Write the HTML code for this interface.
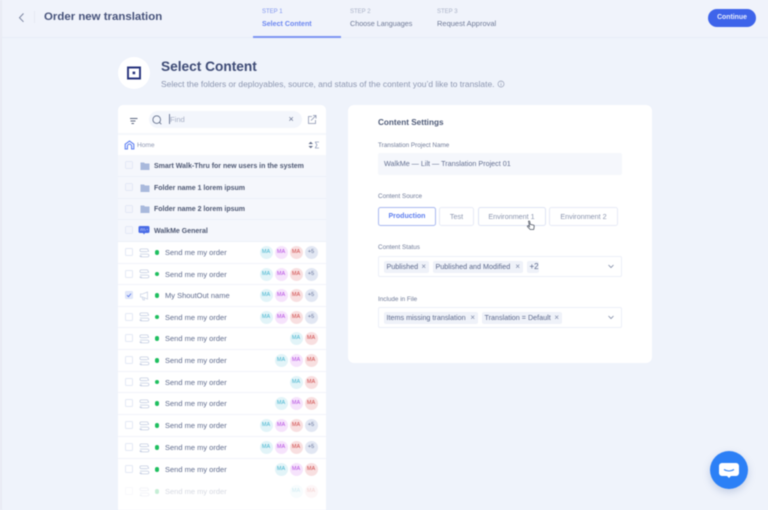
<!DOCTYPE html>
<html><head><meta charset="utf-8">
<style>
*{box-sizing:border-box}
html,body{margin:0;padding:0}
body{width:768px;height:510px;overflow:hidden;background:#eff3fb;font-family:"Liberation Sans",sans-serif;position:relative;color:#4e5a7d}
#w{position:absolute;left:0;top:0;width:768px;height:510px;filter:blur(.5px)}
.a{position:absolute;white-space:nowrap}
.row{position:absolute;left:118px;width:208px;height:21px;background:#fff}
.row.f{background:#f5f7fc}
.row .c{position:absolute;left:7px;top:6px;width:8px;height:8px;border:1px solid #e4e9f5;border-radius:1.5px;background:#fff}
.row.f .c{background:#f3f5fb}
.row .t{position:absolute;left:47px;top:4px;font-size:7.5px;line-height:13px;color:#5f6b8d;white-space:nowrap}
.row.f .t{left:36px;top:4.5px;font-weight:bold;color:#4e5873;font-size:7px}
.row .d{position:absolute;left:36.5px;top:8px;width:4.6px;height:4.6px;border-radius:50%;background:#1fbf5f}
.row svg{position:absolute;left:21px;top:5.5px}
.av{position:absolute;top:4px;width:13px;height:13px;border-radius:50%;font-size:5.5px;line-height:13px;text-align:center}
.m1{background:#e2f4f8;color:#45b4cf}.m2{background:#f6e3fc;color:#b44ee0}.m3{background:#f8dfe0;color:#cf4b4b}.m4{background:#e2e7f3;color:#66749a}
.chip{position:absolute;height:11.5px;background:#eff2f9;border-radius:2px;font-size:7.2px;line-height:11.5px;color:#5a668a;padding-left:2.5px;white-space:nowrap}
.chip i{position:absolute;right:3px;top:0;font-style:normal;font-size:8px;color:#7d88a6}
.btn{position:absolute;top:207px;height:19px;background:#fff;border:1px solid #e7ebf6;border-radius:2.5px;font-size:7.2px;line-height:17px;text-align:center;color:#8a94ae}
.lab{position:absolute;font-size:6.35px;color:#6f7a98;white-space:nowrap;line-height:9px}
.sel{position:absolute;left:378px;width:244px;height:21px;background:#fff;border:1px solid #edf0f8;border-radius:2px}
.sep{position:absolute;left:118px;width:208px;height:1px;background:#f1f3fa}
.sep.s{background:#edf0f8}
</style></head>
<body>
<svg width="0" height="0" style="position:absolute"><defs>
<symbol id="ic" viewBox="0 0 11 10"><path d="M8.300 3.700H2.300a1.400 1.400 0 0 1 0-2.800h5.500a1.400 1.400 0 0 1 1.400 1.400M1 6.100h7.500a1.400 1.400 0 0 1 0 2.800H2.300A1.400 1.400 0 0 1 .9 7.500" fill="none" stroke="#c6cfe3" stroke-width=".8"/><circle cx="9.300" cy="3" r=".8" fill="#c6cfe3"/><circle cx="2" cy="8" r=".8" fill="#c6cfe3"/></symbol>
<symbol id="fo" viewBox="0 0 10 10"><path d="M.5 1.500h3.500l1 1h4.500v6.500H.5z" fill="#a9b9dc"/></symbol>
</defs></svg>
<div id="w">
<!-- top bar -->
<div class="a" style="left:0;top:0;width:768px;height:38px;background:#f0f3fb;border-bottom:1px solid #e7ecf7"></div>
<div class="a" style="left:0;top:0;width:1.5px;height:510px;background:#e8ebf3"></div>
<svg class="a" style="left:17px;top:10.500px" width="9" height="13" viewBox="0 0 9 13"><path d="M6.500 2.500 2.500 6.700l4 4.100" fill="none" stroke="#7a84a0" stroke-width="1"/></svg>
<div class="a" style="left:34px;top:11px;width:1px;height:12px;background:#e6e9f2"></div>
<div class="a" style="left:44px;top:10px;font-size:11.450px;line-height:15px;font-weight:bold;color:#46527a">Order new translation</div>
<div class="a" style="left:262px;top:7.500px;font-size:6px;line-height:8px;color:#7f95ee">STEP 1</div>
<div class="a" style="left:262px;top:18.500px;font-size:7.100px;line-height:10px;font-weight:bold;color:#6c87f0">Select Content</div>
<div class="a" style="left:253px;top:36px;width:88px;height:1.600px;background:#7d95f2"></div>
<div class="a" style="left:350px;top:7.500px;font-size:6px;line-height:8px;color:#a9b1c6">STEP 2</div>
<div class="a" style="left:350px;top:18.500px;font-size:7.200px;line-height:10px;color:#6f7a97">Choose Languages</div>
<div class="a" style="left:437px;top:7.500px;font-size:6px;line-height:8px;color:#a9b1c6">STEP 3</div>
<div class="a" style="left:437px;top:18.500px;font-size:7.500px;line-height:10px;color:#6f7a97">Request Approval</div>
<div class="a" style="left:708px;top:9px;width:48px;height:18px;border-radius:9px;background:#3e64ea;color:#e8edfd;font-size:6.900px;line-height:18.500px;text-align:center;font-weight:bold">Continue</div>

<!-- heading -->
<div class="a" style="left:118px;top:57px;width:32px;height:32px;border-radius:50%;background:#fff"></div>
<svg class="a" style="left:127px;top:66px" width="14" height="14" viewBox="0 0 14 14"><path d="M1 1.500h12v11H1z" fill="none" stroke="#27337c" stroke-width="1.900"/><rect x="5.600" y="5.600" width="2.600" height="2.600" fill="#27337c"/></svg>
<div class="a" style="left:161px;top:57.500px;font-size:13.700px;line-height:18px;font-weight:bold;color:#3d4a75">Select Content</div>
<div class="a" style="left:161px;top:78px;font-size:8.450px;line-height:12px;color:#8c96b0">Select the folders or deployables, source, and status of the content you’d like to translate.</div>
<svg class="a" style="left:497px;top:80px" width="8" height="8" viewBox="0 0 8 8"><circle cx="4" cy="4" r="3" fill="none" stroke="#98a1b8" stroke-width=".7"/><path d="M4 3.500v2.200M4 2.200v.7" stroke="#98a1b8" stroke-width=".7"/></svg>

<!-- left panel -->
<div class="a" style="left:118px;top:105px;width:208px;height:405px;background:#fff;border-radius:5px 5px 0 0"></div>
<svg class="a" style="left:129px;top:117px" width="10" height="9" viewBox="0 0 10 9"><path d="M1 1.500h7.500M1.500 4h5M2.500 6.500h2.500" stroke="#5b6680" stroke-width="1" fill="none"/></svg>
<div class="a" style="left:149px;top:111px;width:153px;height:17px;border-radius:8.500px;background:#f3f6fc"></div>
<svg class="a" style="left:151px;top:113.500px" width="12" height="12" viewBox="0 0 12 12"><circle cx="5.700" cy="5.600" r="3.800" fill="none" stroke="#64708c" stroke-width=".9"/><path d="M8.500 8.400 10.300 10.200" stroke="#64708c" stroke-width=".9"/></svg>
<div class="a" style="left:169px;top:114px;width:.8px;height:10px;background:#6e7a98"></div>
<div class="a" style="left:170px;top:114px;font-size:7.600px;line-height:11px;color:#a8b0c6">Find</div>
<div class="a" style="left:288.500px;top:114px;font-size:9px;line-height:11px;color:#667190">×</div>
<svg class="a" style="left:307px;top:114px" width="10" height="11" viewBox="0 0 10 11"><path d="M5 2.500H1.500v7h7V6M4 6.500 9 1.500M6 1.500h3v3" fill="none" stroke="#8a94b0" stroke-width=".8"/></svg>
<div class="a" style="left:118px;top:133px;width:208px;height:2px;background:#f5f7fc"></div>
<svg class="a" style="left:124px;top:140px" width="11" height="10" viewBox="0 0 11 10"><path d="M1.200 9V4.200L5.500 1l4.300 3.200V9H7.600V6.200a2 2 0 0 0-4.200 0V9z" fill="none" stroke="#5f80f2" stroke-width="1.100"/></svg>
<div class="a" style="left:137px;top:140.500px;font-size:6.600px;line-height:10px;color:#8d97b1">Home</div>
<svg class="a" style="left:308px;top:140px" width="12" height="10" viewBox="0 0 12 10"><path d="M.5 4 2.700 1.800 5 4zM.5 6l2.200 2.200L5 6z" fill="#5d6886"/><path d="M7 2h4M7 8h4M7.200 2 9 5 7.200 8" fill="none" stroke="#98a3bd" stroke-width=".8"/></svg>

<!-- folder rows -->
<div class="row f" style="top:155px"><div class="c"></div><svg width="10" height="10" style="left:21.500px"><use href="#fo"/></svg><div class="t">Smart Walk-Thru for new users in the system</div></div>
<div class="row f" style="top:177px"><div class="c"></div><svg width="10" height="10" style="left:21.500px"><use href="#fo"/></svg><div class="t">Folder name 1 lorem ipsum</div></div>
<div class="row f" style="top:198.500px"><div class="c"></div><svg width="10" height="10" style="left:21.500px"><use href="#fo"/></svg><div class="t">Folder name 2 lorem ipsum</div></div>
<div class="row f" style="top:220px"><div class="c"></div><svg width="12" height="11" viewBox="0 0 12 11" style="left:20px;top:5px"><path d="M2 1h8a1.500 1.500 0 0 1 1.500 1.500v4A1.500 1.500 0 0 1 10 8H7L6 9.500 5 8H2A1.500 1.500 0 0 1 .5 6.500v-4A1.500 1.500 0 0 1 2 1z" fill="#4a6ce6"/><path d="M3 6V3.500M3 4.500c1-1.500 2-1 2 1.500M5 4.500c1-1.500 2-1 2 1.500M8.500 4.500h1.500" stroke="#dfe6fc" stroke-width=".5" fill="none"/></svg><div class="t">WalkMe General</div></div>

<!-- item rows -->
<div class="row" style="top:242px"><div class="c"></div><svg width="11" height="10"><use href="#ic"/></svg><div class="d"></div><div class="t">Send me my order</div><div class="av m1" style="left:141.500px">MA</div><div class="av m2" style="left:156.500px">MA</div><div class="av m3" style="left:171.500px">MA</div><div class="av m4" style="left:186.500px">+5</div></div>
<div class="row" style="top:263.500px"><div class="c"></div><svg width="11" height="10"><use href="#ic"/></svg><div class="d"></div><div class="t">Send me my order</div><div class="av m1" style="left:141.500px">MA</div><div class="av m2" style="left:156.500px">MA</div><div class="av m3" style="left:171.500px">MA</div><div class="av m4" style="left:186.500px">+5</div></div>
<div class="row" style="top:285px"><div class="c" style="background:#e3e9fa;border-color:#dde4f8"><svg width="8" height="8" viewBox="0 0 8 8" style="left:-1px;top:-1px"><path d="M2 4.200 3.500 5.700 6 2.600" fill="none" stroke="#5f7cea" stroke-width=".9"/></svg></div><svg width="11" height="10" viewBox="0 0 11 10"><path d="M8.500 1 3.500 3H1.500v3h2l5 2zM3 6l1 3h1.500L5 7" fill="none" stroke="#cdd5e7" stroke-width=".8"/></svg><div class="d"></div><div class="t">My ShoutOut name</div><div class="av m1" style="left:141.500px">MA</div><div class="av m2" style="left:156.500px">MA</div><div class="av m3" style="left:171.500px">MA</div><div class="av m4" style="left:186.500px">+5</div></div>
<div class="row" style="top:306.500px"><div class="c"></div><svg width="11" height="10"><use href="#ic"/></svg><div class="d"></div><div class="t">Send me my order</div><div class="av m1" style="left:141.500px">MA</div><div class="av m2" style="left:156.500px">MA</div><div class="av m3" style="left:171.500px">MA</div><div class="av m4" style="left:186.500px">+5</div></div>
<div class="row" style="top:328px"><div class="c"></div><svg width="11" height="10"><use href="#ic"/></svg><div class="d"></div><div class="t">Send me my order</div><div class="av m1" style="left:171.500px">MA</div><div class="av m3" style="left:186.500px">MA</div></div>
<div class="row" style="top:350px"><div class="c"></div><svg width="11" height="10"><use href="#ic"/></svg><div class="d"></div><div class="t">Send me my order</div><div class="av m1" style="left:156.500px">MA</div><div class="av m2" style="left:171.500px">MA</div><div class="av m3" style="left:186.500px">MA</div></div>
<div class="row" style="top:371.500px"><div class="c"></div><svg width="11" height="10"><use href="#ic"/></svg><div class="d"></div><div class="t">Send me my order</div><div class="av m1" style="left:171.500px">MA</div><div class="av m3" style="left:186.500px">MA</div></div>
<div class="row" style="top:393px"><div class="c"></div><svg width="11" height="10"><use href="#ic"/></svg><div class="d"></div><div class="t">Send me my order</div><div class="av m1" style="left:156.500px">MA</div><div class="av m2" style="left:171.500px">MA</div><div class="av m3" style="left:186.500px">MA</div></div>
<div class="row" style="top:415px"><div class="c"></div><svg width="11" height="10"><use href="#ic"/></svg><div class="d"></div><div class="t">Send me my order</div><div class="av m1" style="left:141.500px">MA</div><div class="av m2" style="left:156.500px">MA</div><div class="av m3" style="left:171.500px">MA</div><div class="av m4" style="left:186.500px">+5</div></div>
<div class="row" style="top:437px"><div class="c"></div><svg width="11" height="10"><use href="#ic"/></svg><div class="d"></div><div class="t">Send me my order</div><div class="av m1" style="left:141.500px">MA</div><div class="av m2" style="left:156.500px">MA</div><div class="av m3" style="left:171.500px">MA</div><div class="av m4" style="left:186.500px">+5</div></div>
<div class="row" style="top:459px"><div class="c"></div><svg width="11" height="10"><use href="#ic"/></svg><div class="d"></div><div class="t">Send me my order</div><div class="av m1" style="left:156.500px">MA</div><div class="av m2" style="left:171.500px">MA</div><div class="av m3" style="left:186.500px">MA</div></div>
<div class="row" style="top:481px;opacity:.25"><div class="c"></div><svg width="11" height="10"><use href="#ic"/></svg><div class="d"></div><div class="t">Send me my order</div><div class="av m1" style="left:171.500px">MA</div><div class="av m3" style="left:186.500px">MA</div></div>

<!-- row separators -->
<div class="sep s" style="top:176px"></div>
<div class="sep s" style="top:198px"></div>
<div class="sep s" style="top:219px"></div>
<div class="sep s" style="top:241px"></div>
<div class="sep" style="top:262.500px"></div>
<div class="sep" style="top:284px"></div>
<div class="sep" style="top:305.500px"></div>
<div class="sep" style="top:327px"></div>
<div class="sep" style="top:349px"></div>
<div class="sep" style="top:370.500px"></div>
<div class="sep" style="top:392px"></div>
<div class="sep" style="top:414px"></div>
<div class="sep" style="top:436px"></div>
<div class="sep" style="top:458px"></div>

<!-- right panel -->
<div class="a" style="left:348px;top:105px;width:304px;height:258px;background:#fff;border-radius:6px"></div>
<div class="a" style="left:378px;top:117px;font-size:8.200px;line-height:12px;font-weight:bold;color:#4f5b78">Content Settings</div>
<div class="lab" style="left:378px;top:141px">Translation Project Name</div>
<div class="a" style="left:378px;top:153px;width:244px;height:22px;background:#f5f7fc;border-radius:2px"></div>
<div class="a" style="left:384px;top:158px;font-size:7.200px;line-height:12px;color:#626e90">WalkMe — Lilt — Translation Project 01</div>
<div class="lab" style="left:378px;top:192px">Content Source</div>
<div class="btn" style="left:378px;width:58px;border:1.200px solid #a9b9f0;color:#5f7fee;font-weight:bold;line-height:18px;font-size:7px">Production</div>
<div class="btn" style="left:439px;width:35px">Test</div>
<div class="btn" style="left:477.500px;width:68px;border-color:#dfe4f4">Environment 1</div>
<div class="btn" style="left:549px;width:69px">Environment 2</div>
<svg class="a" style="left:526px;top:220px" width="10" height="12" viewBox="0 0 10 12"><path d="M2.500 1.200c.7-.4 1.200 0 1.300.6l.4 2.600 3 .6c.8.2 1.100.8 1 1.500l-.5 3H4.200L1.500 6.600c-.4-.6.300-1.300 1-.8l1 .8z" fill="#fff" stroke="#4e5563" stroke-width=".8"/></svg>

<div class="lab" style="left:378px;top:243px">Content Status</div>
<div class="sel" style="top:256px"></div>
<div class="chip" style="left:384px;top:261px;width:45px">Published<i>×</i></div>
<div class="chip" style="left:433px;top:261px;width:90px">Published and Modified<i>×</i></div>
<div class="chip" style="left:527px;top:261px;width:12px;font-size:8px">+2</div>
<svg class="a" style="left:607px;top:263px" width="8" height="7" viewBox="0 0 8 7"><path d="M1.500 2 4 4.500 6.500 2" fill="none" stroke="#7b86a3" stroke-width=".8"/></svg>

<div class="lab" style="left:378px;top:294.500px">Include in File</div>
<div class="sel" style="top:307px"></div>
<div class="chip" style="left:384px;top:312px;width:94px">Items missing translation<i>×</i></div>
<div class="chip" style="left:482px;top:312px;width:80px">Translation = Default<i>×</i></div>
<svg class="a" style="left:607px;top:314px" width="8" height="7" viewBox="0 0 8 7"><path d="M1.500 2 4 4.500 6.500 2" fill="none" stroke="#7b86a3" stroke-width=".8"/></svg>

<!-- chat -->
<div class="a" style="left:710px;top:451px;width:38px;height:38px;border-radius:50%;background:#2c80f6;box-shadow:0 3px 8px rgba(60,90,160,.25)"></div>
<svg class="a" style="left:718px;top:462px" width="22" height="18" viewBox="0 0 22 18"><path d="M4 1h14a3 3 0 0 1 3 3v7a3 3 0 0 1-3 3h-5l-2 2-2-2H4a3 3 0 0 1-3-3V4a3 3 0 0 1 3-3z" fill="#fff"/><path d="M6 7.500c3 2 7 2 10 0" fill="none" stroke="#2c80f6" stroke-width="1.100"/></svg>
</div></body></html>
